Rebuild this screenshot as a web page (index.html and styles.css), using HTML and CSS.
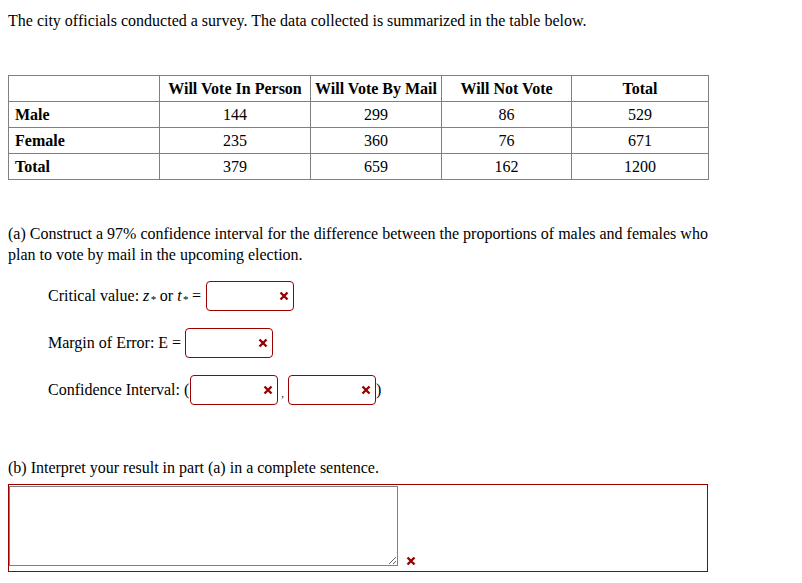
FILE: index.html
```html
<!DOCTYPE html>
<html>
<head>
<meta charset="utf-8">
<link rel="stylesheet" href="styles.css">
</head>
<body>
<div class="page">
  <p class="intro">The city officials conducted a survey. The data collected is summarized in the table below.</p>

  <table class="data">
    <colgroup>
      <col class="c1"><col class="c2"><col class="c3"><col class="c4"><col class="c5">
    </colgroup>
    <tr>
      <th></th><th>Will Vote In Person</th><th>Will Vote By Mail</th><th>Will Not Vote</th><th>Total</th>
    </tr>
    <tr><th class="rl">Male</th><td>144</td><td>299</td><td>86</td><td>529</td></tr>
    <tr><th class="rl">Female</th><td>235</td><td>360</td><td>76</td><td>671</td></tr>
    <tr><th class="rl">Total</th><td>379</td><td>659</td><td>162</td><td>1200</td></tr>
  </table>

  <p class="qa">(a) Construct a 97% confidence interval for the difference between the proportions of males and females who plan to vote by mail in the upcoming election.</p>

  <div class="answers">
    <div class="arow">
      <span class="lbl">Critical value: <i class="m">z</i><sub class="star">*</sub> or <i class="m">t</i><sub class="star">*</sub> =</span>
      <span class="box"><svg class="x" viewBox="0 0 10 10"><path d="M1.5 1.5L8.5 8.5M8.5 1.5L1.5 8.5"/></svg></span>
    </div>
    <div class="arow">
      <span class="lbl2">Margin of Error: E =</span>
      <span class="box"><svg class="x" viewBox="0 0 10 10"><path d="M1.5 1.5L8.5 8.5M8.5 1.5L1.5 8.5"/></svg></span>
    </div>
    <div class="arow">
      <span class="lbl3">Confidence Interval: (</span>
      <span class="box"><svg class="x" viewBox="0 0 10 10"><path d="M1.5 1.5L8.5 8.5M8.5 1.5L1.5 8.5"/></svg></span>
      <span class="comma">,</span>
      <span class="box"><svg class="x" viewBox="0 0 10 10"><path d="M1.5 1.5L8.5 8.5M8.5 1.5L1.5 8.5"/></svg></span>
      <span>)</span>
    </div>
  </div>

  <p class="qb">(b) Interpret your result in part (a) in a complete sentence.</p>
  <div class="bwrap">
    <textarea class="ta"></textarea>
    <svg class="x bx" viewBox="0 0 10 10"><path d="M1.5 1.5L8.5 8.5M8.5 1.5L1.5 8.5"/></svg>
  </div>
</div>
</body>
</html>
```
FILE: styles.css
```css
html, body {
  margin: 0;
  padding: 0;
  background: #fff;
}
body {
  font-family: "Liberation Serif", "DejaVu Serif", serif;
  font-size: 16px;
  color: #000;
}
.page {
  padding: 11px 8px 0 8px;
  width: 700px;
  display: flex;
  flex-direction: column;
}
p { margin: 0; }
.intro {
  line-height: 19px;
}
.data {
  margin-top: 45px;
  border-collapse: collapse;
  width: 700px;
  table-layout: fixed;
  font-size: 16px;
}
.c1 { width: 151px; }
.c2 { width: 151px; }
.c3 { width: 131px; }
.c4 { width: 130px; }
.c5 { width: 137px; }
.data th, .data td {
  border: 1px solid #808080;
  height: 25px;
  padding: 0 3px;
  text-align: center;
  vertical-align: middle;
  white-space: nowrap;
}
.data th { font-weight: bold; }
.data th.rl { text-align: left; padding-left: 6px; }
.qa {
  margin-top: 43px;
  line-height: 21px;
}
.answers {
  display: flex;
  flex-direction: column;
  gap: 17px;
  margin-top: 16px;
  padding-left: 40px;
}
.arow {
  display: flex;
  align-items: center;
  height: 30px;
}
.lbl { margin-right: 5px; }
.lbl2 { margin-right: 4px; }
.lbl3 { margin-right: 1px; }
.m { font-style: italic; }
.star {
  font-size: 11px;
  vertical-align: -2px;
  font-style: italic;
  margin-left: 1px;
}
.box {
  box-sizing: border-box;
  width: 88px;
  height: 30px;
  border: 1px solid #9b0000;
  border-radius: 4px;
  display: flex;
  align-items: center;
  justify-content: flex-end;
  padding-right: 4px;
}
.x {
  width: 10px;
  height: 10px;
  fill: none;
  stroke: #9b0000;
  stroke-width: 2.4;
}
.comma {
  font-size: 11px;
  align-self: flex-end;
  margin: 0 4px 6px 3px;
}
.qb {
  margin-top: 54px;
  line-height: 18px;
}
.bwrap {
  margin-top: 7px;
  box-sizing: border-box;
  width: 700px;
  height: 88px;
  border: 1px solid #9b0000;
  display: flex;
  align-items: flex-end;
  padding: 1px 0 5px 0;
}
.ta {
  box-sizing: border-box;
  width: 389px;
  height: 80px;
  margin: 0;
  border: 1px solid #808080;
  resize: both;
  align-self: flex-start;
}
.bx {
  margin-left: 8px;
}
```
